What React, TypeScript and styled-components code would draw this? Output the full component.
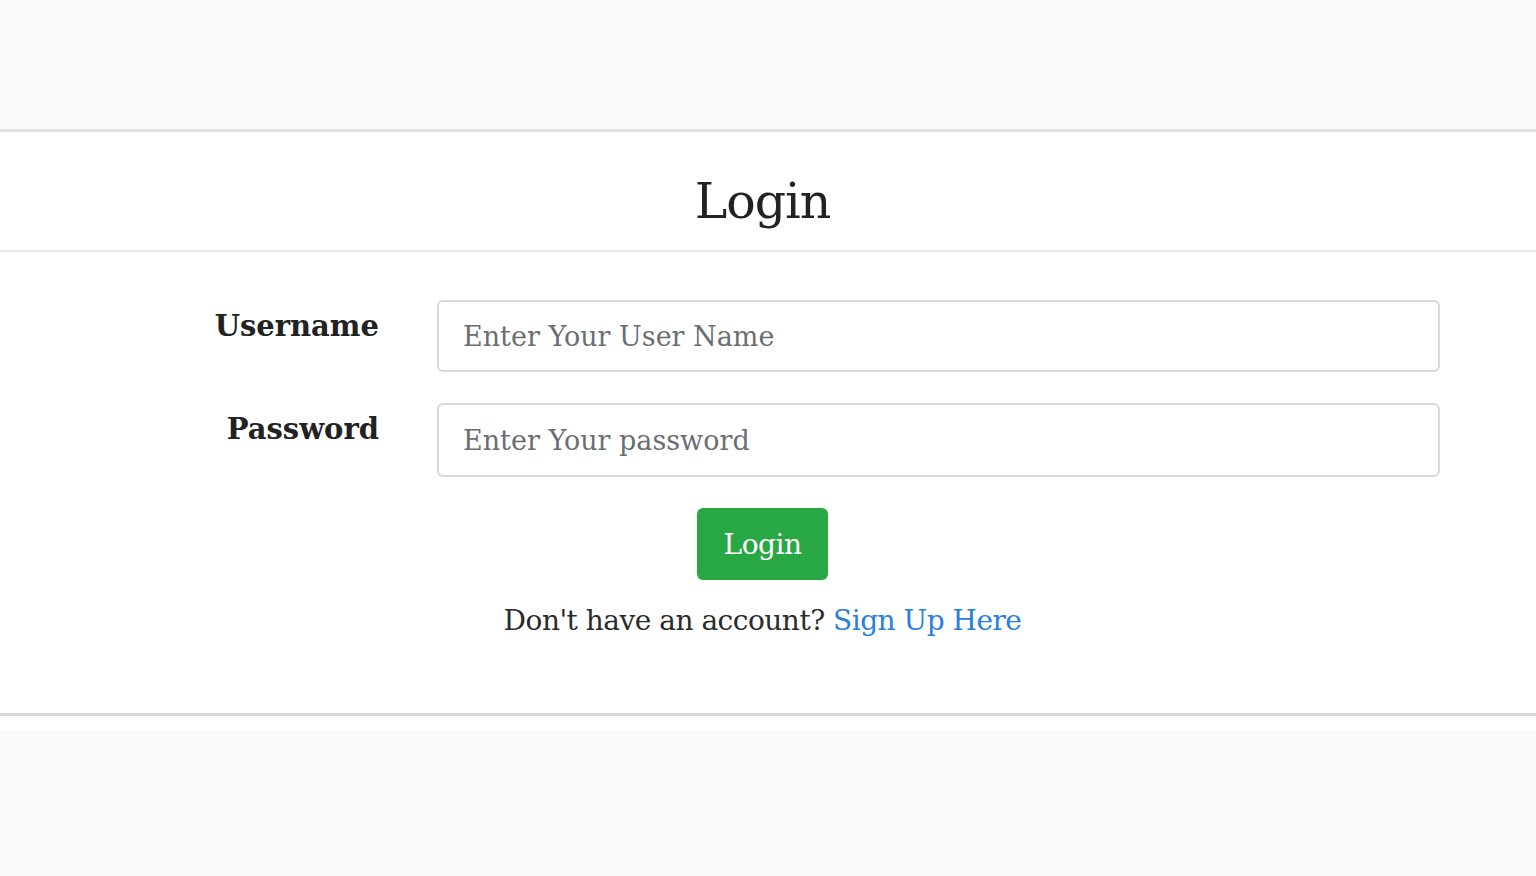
import styled, { createGlobalStyle } from 'styled-components';

const GlobalStyle = createGlobalStyle`
  html, body {
    margin: 0;
    padding: 0;
    background: #f9f9f9;
  }
  body {
    font-family: 'DejaVu Serif', Georgia, serif;
    color: #252525;
  }
`;

const Page = styled.div`
  padding-top: 129px;
  height: 876px;
  box-sizing: border-box;
  overflow: hidden;
`;

const Card = styled.section`
  background: #fff;
  border-top: 3px solid #e2e2e2;
  border-bottom: 3px solid #dadada;
  margin-bottom: 14px;
  box-shadow: 0 14px 0 #fff;
`;

const Header = styled.header`
  height: 118px;
  border-bottom: 2px solid #e6e6e6;
  display: flex;
  align-items: center;
  justify-content: center;
  padding-right: 11px;
`;

const Title = styled.h1`
  margin: 0;
  padding-top: 20px;
  font-family: 'DejaVu Serif', Georgia, serif;
  font-weight: 400;
  font-size: 49px;
  letter-spacing: -1px;
  color: #222;
`;

const Body = styled.div`
  padding: 48px 0 0;
  height: 461px;
  box-sizing: border-box;
`;

const Row = styled.div`
  display: flex;
  align-items: flex-start;
  margin-bottom: 31px;
`;

const Label = styled.label`
  width: 379px;
  margin-right: 58px;
  text-align: right;
  font-weight: 700;
  font-size: 29px;
  line-height: 52px;
  color: #222;
`;

const Input = styled.input<{ $h: number }>`
  width: 1003px;
  height: ${(p) => p.$h}px;
  box-sizing: border-box;
  border: 2px solid #d8d8d8;
  border-radius: 6px;
  padding: 0 24px;
  font-family: 'DejaVu Serif', Georgia, serif;
  font-size: 27px;
  color: #333;
  outline: none;
  &::placeholder {
    color: #6a6e73;
  }
`;

const Actions = styled.div`
  display: flex;
  flex-direction: column;
  align-items: center;
  padding-right: 11px;
`;

const Button = styled.button`
  width: 131px;
  height: 72px;
  border: none;
  border-radius: 6px;
  background: #28a745;
  color: #fff;
  font-family: 'DejaVu Serif', Georgia, serif;
  font-size: 28px;
  letter-spacing: -0.5px;
  cursor: pointer;
`;

const Prompt = styled.p`
  margin: 24px 0 0;
  font-size: 28px;
  letter-spacing: -0.5px;
  color: #2b2b2b;
`;

const Link = styled.a`
  color: #2a7fdc;
  text-decoration: none;
`;

export default function App() {
  return (
    <>
      <GlobalStyle />
      <Page>
        <Card>
          <Header>
            <Title>Login</Title>
          </Header>
          <Body>
            <Row>
              <Label htmlFor="username">Username</Label>
              <Input id="username" $h={72} placeholder="Enter Your User Name" />
            </Row>
            <Row>
              <Label htmlFor="password">Password</Label>
              <Input id="password" type="password" $h={74} placeholder="Enter Your password" />
            </Row>
            <Actions>
              <Button type="button">Login</Button>
              <Prompt>
                Don't have an account? <Link href="#">Sign Up Here</Link>
              </Prompt>
            </Actions>
          </Body>
        </Card>
      </Page>
    </>
  );
}
